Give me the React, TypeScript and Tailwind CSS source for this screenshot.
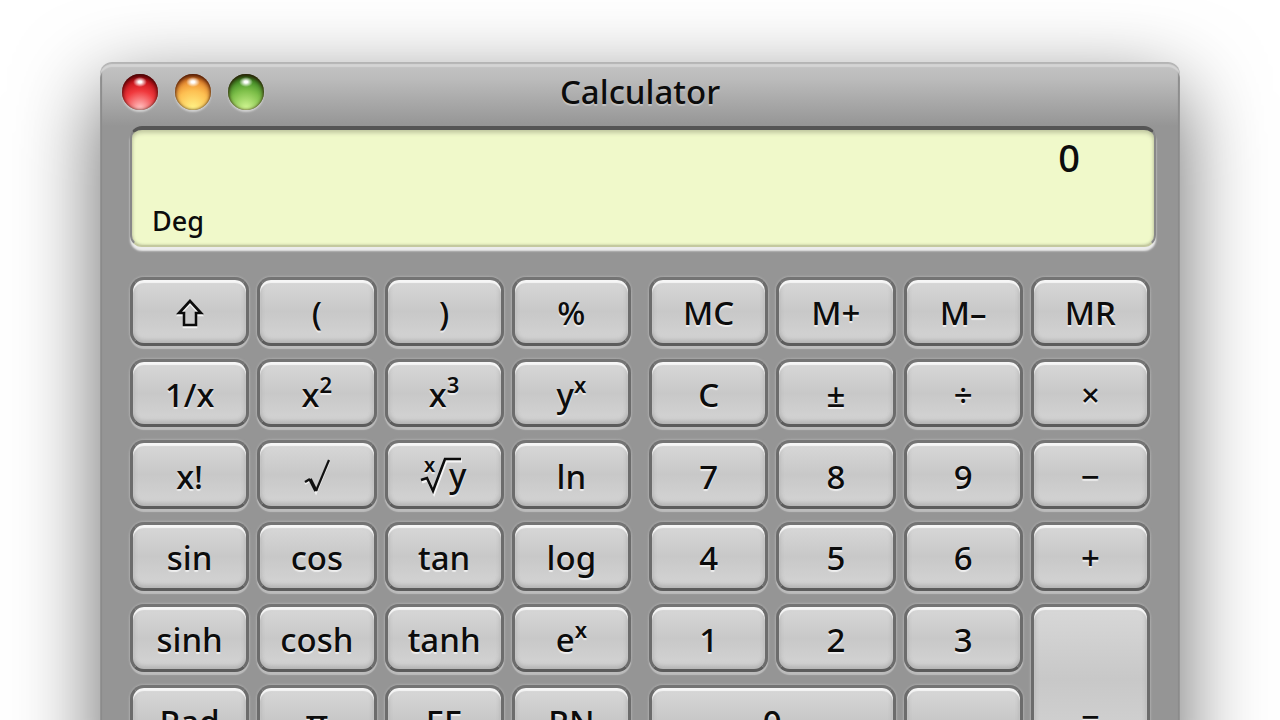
import type { ReactNode } from 'react';
import clsx from 'clsx';

type KeyDef = {
  id: string;
  label: ReactNode;
  className?: string;
};

const sup = (base: string, exp: string) => (
  <span className="flex items-start">
    {base}
    <span className="pt-0.5 text-[22px] leading-5 font-semibold">{exp}</span>
  </span>
);

function ShiftIcon() {
  return (
    <svg width="28" height="32" viewBox="0 0 28 32" fill="none" strokeWidth="2.6">
      <path d="M14 4 L3 16 H8 V28 H20 V16 H25 Z" stroke="#f4f4f4" transform="translate(0 2)" />
      <path d="M14 4 L3 16 H8 V28 H20 V16 H25 Z" stroke="#0c0c0c" />
    </svg>
  );
}

function SqrtIcon() {
  return (
    <svg width="32" height="40" viewBox="0 0 32 40" fill="none">
      <path d="M4 25 L9 22 L15 34 L28 3" stroke="#f0f0f0" strokeWidth="2" transform="translate(0 2)" />
      <path d="M4 25 L9 22" stroke="#111" strokeWidth="2.4" />
      <path d="M9 22 L15 34" stroke="#111" strokeWidth="3.6" />
      <path d="M15 34 L28 3" stroke="#111" strokeWidth="2.2" />
    </svg>
  );
}

function RootIcon() {
  return (
    <svg width="50" height="44" viewBox="0 0 50 44" fill="none" className="overflow-visible">
      <path d="M2 25 L8 23 L14 36 L26 4 H42" stroke="#f6f6f6" strokeWidth="3" transform="translate(1 2)" />
      <path d="M2 25 L8 23 L14 36 L26 4 H42" stroke="#0c0c0c" strokeWidth="2.6" />
      <text x="5" y="17" fontSize="20" fontWeight="600" fill="#0c0c0c">x</text>
      <text x="30" y="32" fontSize="33" fontWeight="500" fill="#0c0c0c">y</text>
    </svg>
  );
}

const scientificKeys: KeyDef[] = [
  { id: 'shift', label: <ShiftIcon /> },
  { id: 'open paren', label: '(' },
  { id: 'close paren', label: ')' },
  { id: 'percent', label: '%' },
  { id: 'reciprocal', label: '1/x' },
  { id: 'square', label: sup('x', '2') },
  { id: 'cube', label: sup('x', '3') },
  { id: 'power', label: sup('y', 'x') },
  { id: 'factorial', label: 'x!' },
  { id: 'square root', label: <SqrtIcon /> },
  { id: 'nth root', label: <RootIcon /> },
  { id: 'ln', label: 'ln' },
  { id: 'sin', label: 'sin' },
  { id: 'cos', label: 'cos' },
  { id: 'tan', label: 'tan' },
  { id: 'log', label: 'log' },
  { id: 'sinh', label: 'sinh' },
  { id: 'cosh', label: 'cosh' },
  { id: 'tanh', label: 'tanh' },
  { id: 'exp', label: sup('e', 'x') },
  { id: 'radians', label: 'Rad' },
  { id: 'pi', label: 'π' },
  { id: 'EE', label: 'EE' },
  { id: 'RN', label: 'RN' },
];

const basicKeys: KeyDef[] = [
  { id: 'MC', label: 'MC' },
  { id: 'M+', label: 'M+' },
  { id: 'M-', label: 'M–' },
  { id: 'MR', label: 'MR' },
  { id: 'clear', label: 'C' },
  { id: 'plus minus', label: '±' },
  { id: 'divide', label: '÷' },
  { id: 'multiply', label: '×' },
  { id: '7', label: '7' },
  { id: '8', label: '8' },
  { id: '9', label: '9' },
  { id: 'subtract', label: '−' },
  { id: '4', label: '4' },
  { id: '5', label: '5' },
  { id: '6', label: '6' },
  { id: 'add', label: '+' },
  { id: '1', label: '1' },
  { id: '2', label: '2' },
  { id: '3', label: '3' },
  { id: 'equals', label: '=', className: 'row-span-2 items-end pb-2' },
  { id: '0', label: '0', className: 'col-span-2 items-center' },
  { id: 'decimal', label: '.' },
];

function Key({ id, label, className = 'items-center' }: KeyDef) {
  return (
    <button
      type="button"
      aria-label={id}
      className={clsx(
        'flex min-w-0 justify-center rounded-[14px] border-[3px] border-t-[#747474] border-x-[#6c6c6c] border-b-[#5c5c5c] pt-1',
        'bg-linear-to-b from-[#d8d8d8] via-[#c8c8c8] to-[#d4d4d4]',
        'shadow-[0_3px_1px_#bcbcbc,0_0_2px_1px_#a8a8a8,inset_0_3px_1px_#f6f6f6,inset_0_-3px_4px_#b4b4b4,inset_0_0_5px_#bbbbbb]',
        '[text-shadow:0_2px_1px_#efefef]',
        className,
      )}
    >
      {label}
    </button>
  );
}

function KeyGroup({ keys }: { keys: KeyDef[] }) {
  return (
    <div className="grid h-[477px] flex-1 grid-cols-4 grid-rows-6 gap-x-2 gap-y-[13px]">
      {keys.map((key) => (
        <Key key={key.id} {...key} />
      ))}
    </div>
  );
}

function WindowButtons() {
  const base =
    'relative size-9 rounded-full shadow-[0_2px_2px_#d0d0d0,inset_0_3px_5px_rgba(40,0,0,0.65),inset_0_0_3px_rgba(50,20,0,0.7)]';
  const shine = (
    <span className="absolute top-[3px] left-[11px] h-[10px] w-[14px] rounded-full bg-[radial-gradient(ellipse_at_center,#ffffff_15%,transparent_70%)]" />
  );
  return (
    <div className="flex flex-1 gap-[17px]">
      <button
        type="button"
        aria-label="Close"
        className={clsx(base, 'bg-[radial-gradient(circle_at_50%_95%,#ffb4b4_5%,#f0393d_45%,#c41018_75%,#60000a_100%)]')}
      >
        {shine}
      </button>
      <button
        type="button"
        aria-label="Minimize"
        className={clsx(base, 'bg-[radial-gradient(circle_at_50%_95%,#ffed80_5%,#fdc052_45%,#e8852c_75%,#8c3000_100%)]')}
      >
        {shine}
      </button>
      <button
        type="button"
        aria-label="Zoom"
        className={clsx(base, 'bg-[radial-gradient(circle_at_50%_95%,#c8f08a_5%,#7fc04a_45%,#3f8c24_75%,#124408_100%)]')}
      >
        {shine}
      </button>
    </div>
  );
}

export default function App() {
  return (
    <div className="h-screen overflow-hidden bg-white px-[100px] pt-[62px] font-['Noto_Sans','Open_Sans',sans-serif] text-[33px] leading-[46px] font-medium text-[#0c0c0c]">
      <main className="rounded-t-xl bg-[#959595] bg-[linear-gradient(#c4c4c4,#bcbcbc_16px,#959595_64px)] px-[30px] pb-[30px] shadow-[0_28px_84px_rgba(0,0,0,0.6),inset_0_2px_1px_#b4b4b4,inset_0_5px_1px_#d4d4d4,inset_2px_0_1px_#8a8a8a,inset_-2px_0_1px_#8a8a8a]">
        <header className="-mx-2 flex h-16 items-center pb-1">
          <WindowButtons />
          <h1 className="[text-shadow:0_2px_1px_#c4c4c4]">Calculator</h1>
          <div className="flex-1" />
        </header>

        <section className="-mr-1.5 flex h-[121px] flex-col justify-between rounded-xl border-t-4 border-x-2 border-b-2 border-t-[#555] border-x-[#888] border-b-[#c4c99f] bg-[#f0f9ca] px-5 shadow-[0_4px_2px_#ececec,inset_0_3px_4px_#c3caa3,inset_0_0_3px_#b9c09a]">
          <output className="pr-[54px] text-right text-[38px] leading-[54px]">0</output>
          <span className="pb-1.5 text-[27px] leading-9">Deg</span>
        </section>

        <div className="flex gap-[18px] pt-[30px]">
          <KeyGroup keys={scientificKeys} />
          <KeyGroup keys={basicKeys} />
        </div>
      </main>
    </div>
  );
}
